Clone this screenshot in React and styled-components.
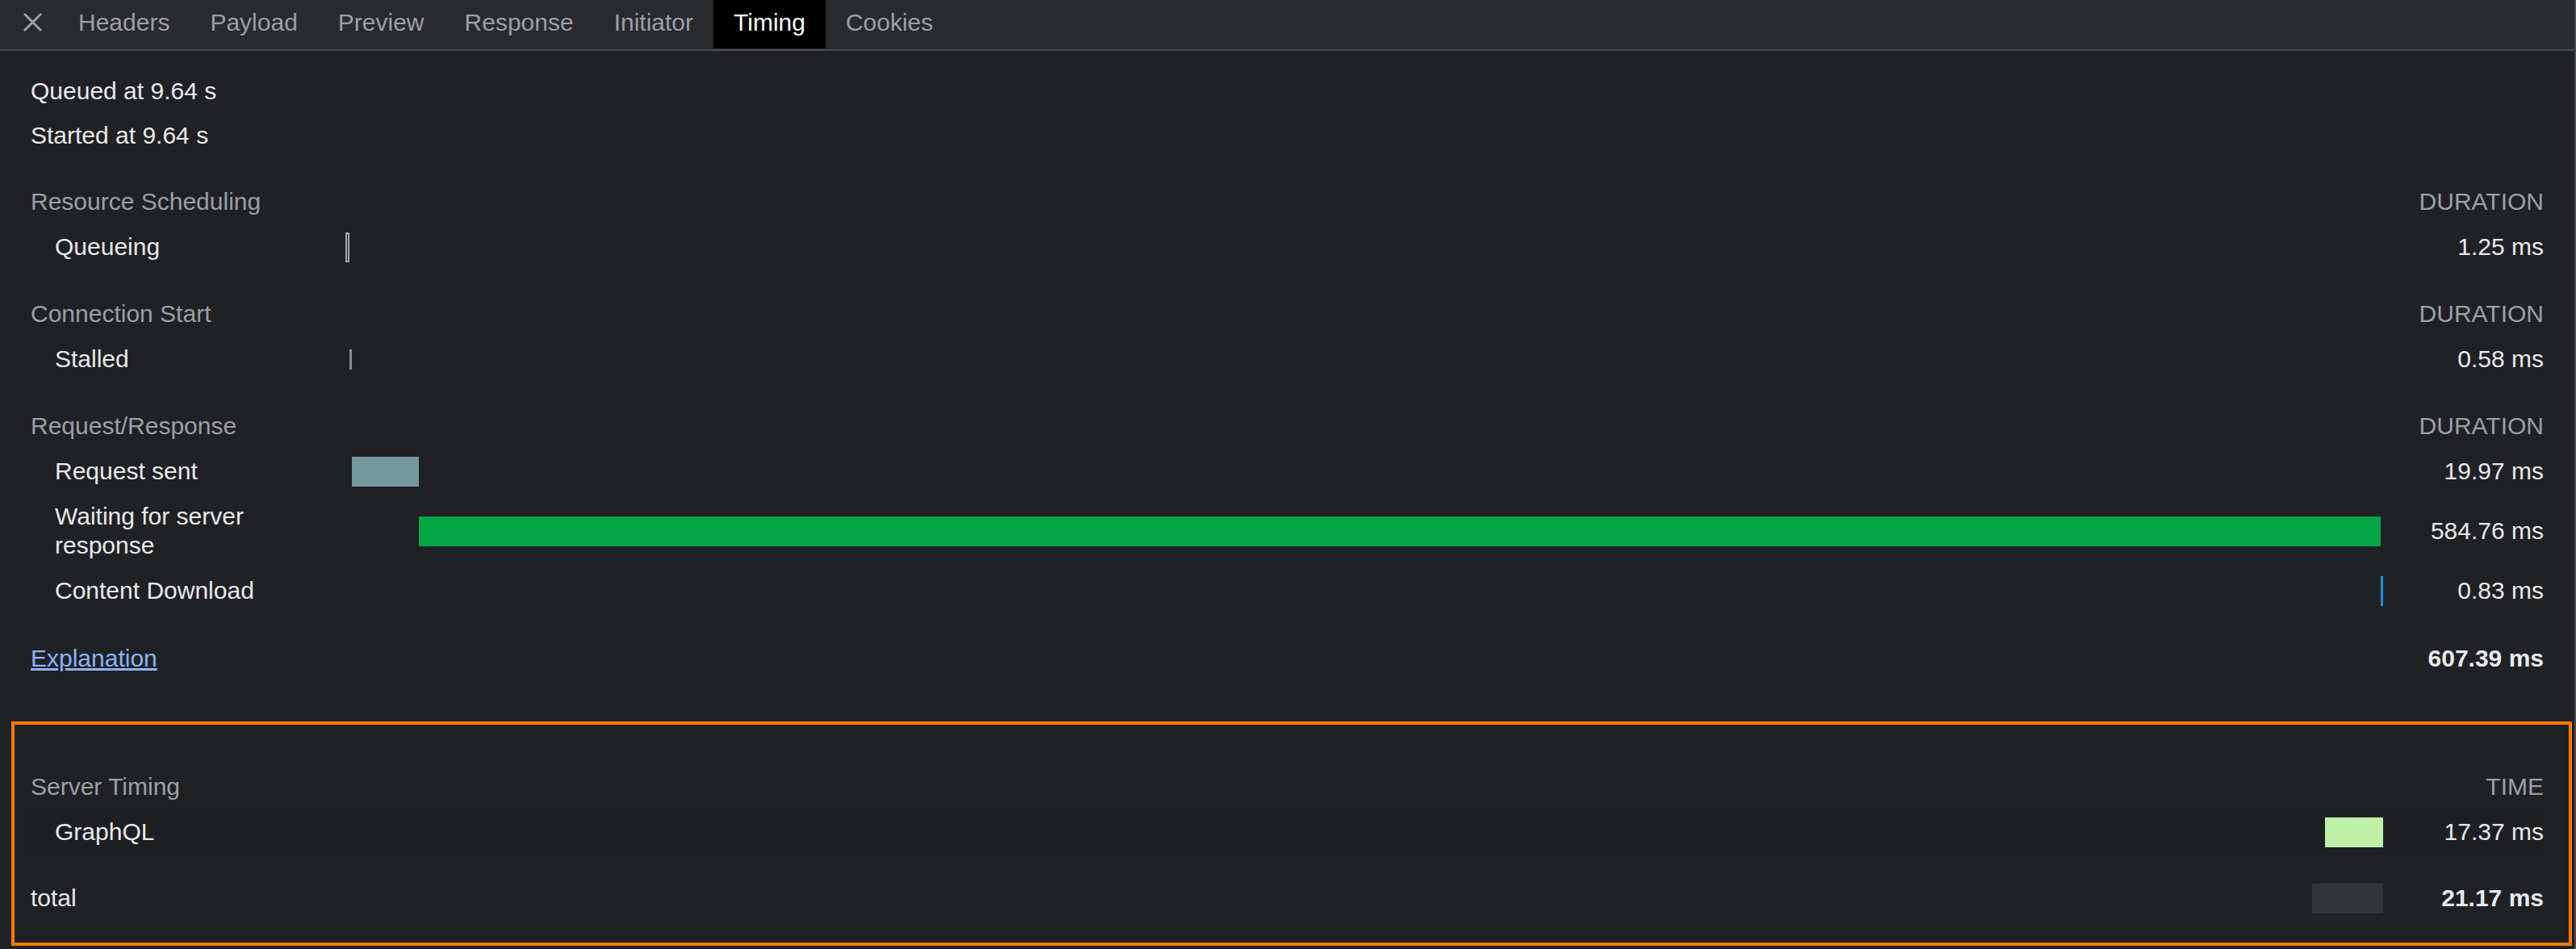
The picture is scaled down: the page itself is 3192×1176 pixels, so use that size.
import React from 'react'
import styled, {createGlobalStyle} from 'styled-components'

const GlobalStyle = createGlobalStyle`
  html, body {
    margin: 0;
    padding: 0;
    background: #202124;
    overflow: hidden;
  }
  * {
    box-sizing: border-box;
  }
`

const TOTAL_MS = 607.39
const TIMELINE_PX = 2525
const pxPerMs = TIMELINE_PX / TOTAL_MS

const tabs = ['Headers', 'Payload', 'Preview', 'Response', 'Initiator', 'Timing', 'Cookies']

const sections = [
	{
		title: 'Resource Scheduling',
		rows: [{label: 'Queueing', start: 0, ms: 1.25, value: '1.25 ms', kind: 'queue'}]
	},
	{
		title: 'Connection Start',
		rows: [{label: 'Stalled', start: 1.25, ms: 0.58, value: '0.58 ms', kind: 'stalled'}]
	},
	{
		title: 'Request/Response',
		rows: [
			{label: 'Request sent', start: 1.83, ms: 19.97, value: '19.97 ms', kind: 'sent'},
			{label: 'Waiting for server response', start: 21.8, ms: 584.76, value: '584.76 ms', kind: 'waiting'},
			{label: 'Content Download', start: 606.56, ms: 0.83, value: '0.83 ms', kind: 'download'}
		]
	}
]

const serverTimings = [
	{label: 'GraphQL', ms: 17.37, value: '17.37 ms'}
]

const CloseIcon = () => (
	<svg width="25" height="25" viewBox="0 0 25 25">
		<path d="M2 2 L23 23 M23 2 L2 23" stroke="#9aa0a6" strokeWidth="3" fill="none"/>
	</svg>
)

const App = () => {
	return (
		<Page>
			<GlobalStyle/>
			<TabBar>
				<CloseButton type="button"><CloseIcon/></CloseButton>
				{tabs.map((tab) => (
					<Tab key={tab} $active={tab === 'Timing'}>{tab}</Tab>
				))}
			</TabBar>

			<Content>
				<InfoLine>Queued at 9.64 s</InfoLine>
				<InfoLine>Started at 9.64 s</InfoLine>

				{sections.map((section) => (
					<Section key={section.title}>
						<Row>
							<HeaderLabel>{section.title}</HeaderLabel>
							<span/>
							<HeaderValue>DURATION</HeaderValue>
						</Row>
						{section.rows.map((row) => (
							<Row key={row.label}>
								<Label $indent>{row.label}</Label>
								<Timeline>
									<Bar
										$kind={row.kind}
										style={{
											marginLeft: row.start * pxPerMs,
											width: Math.max(row.ms * pxPerMs, 3)
										}}
									/>
								</Timeline>
								<Value>{row.value}</Value>
							</Row>
						))}
					</Section>
				))}

				<ExplanationRow>
					<Label><Link href="#">Explanation</Link></Label>
					<span/>
					<Value $bold>607.39 ms</Value>
				</ExplanationRow>

				<Highlight>
					<Row>
						<HeaderLabel>Server Timing</HeaderLabel>
						<span/>
						<HeaderValue>TIME</HeaderValue>
					</Row>
					{serverTimings.map((item) => (
						<Row key={item.label} $shaded>
							<Label $indent>{item.label}</Label>
							<Timeline>
								<Bar
									$kind="server"
									style={{
										marginLeft: (TOTAL_MS - item.ms) * pxPerMs,
										width: item.ms * pxPerMs
									}}
								/>
							</Timeline>
							<Value>{item.value}</Value>
						</Row>
					))}
					<TotalRow>
						<Label>total</Label>
						<Timeline>
							<Bar
								$kind="total"
								style={{
									marginLeft: (TOTAL_MS - 21.17) * pxPerMs,
									width: 21.17 * pxPerMs
								}}
							/>
						</Timeline>
						<Value $bold>21.17 ms</Value>
					</TotalRow>
				</Highlight>
			</Content>
		</Page>
	)
}

export default App

const barColors = {
	sent: '#74999a',
	waiting: '#04a647',
	download: '#1a8fd8',
	stalled: '#8a8c8f',
	server: '#bff0a8',
	total: '#333438'
}

const Page = styled.div`
  width: 100%;
  min-height: 100vh;
  background: #202124;
  border-right: 2px solid #4a4c50;
  font-family: "Liberation Sans", Arial, Helvetica, sans-serif;
  font-size: 30px;
  color: #e8eaed;
`

const TabBar = styled.div`
  display: flex;
  align-items: stretch;
  height: 63px;
  padding-left: 28px;
  background: #292a2d;
  border-bottom: 2px solid #4a4c50;
`

const CloseButton = styled.button`
  display: flex;
  align-items: flex-start;
  padding: 15px 0 0;
  margin-right: 19px;
  background: transparent;
  border: none;
  cursor: pointer;
`

const Tab = styled.div`
  padding: 0 25px;
  height: 60px;
  line-height: 56px;
  color: ${({$active}) => $active ? '#ffffff' : '#9aa0a6'};
  background: ${({$active}) => $active ? '#000000' : 'transparent'};
  white-space: nowrap;
`

const Content = styled.div`
  display: flex;
  flex-direction: column;
  padding: 22px 38px 0;
`

const InfoLine = styled.div`
  height: 55px;
  line-height: 55px;
  color: #e8eaed;
`

const Section = styled.div`
  display: flex;
  flex-direction: column;
  margin-top: 27px;
`

const Row = styled.div`
  display: grid;
  grid-template-columns: 390px 1fr 199px;
  align-items: center;
  min-height: 56px;
  padding: 10px 0;
  line-height: 36px;
  background: ${({$shaded}) => $shaded ? '#1e1f22' : 'transparent'};
`

const ExplanationRow = styled(Row)`
  margin-top: 28px;
`

const TotalRow = styled(Row)`
  margin-top: 26px;
`

const HeaderLabel = styled.div`
  color: #9aa0a6;
  white-space: nowrap;
`

const HeaderValue = styled.div`
  color: #9aa0a6;
  text-align: right;
  text-transform: uppercase;
`

const Label = styled.div`
  padding-left: ${({$indent}) => $indent ? '30px' : '0'};
  padding-right: 24px;
  color: #e8eaed;
`

const Timeline = styled.div`
  display: flex;
  align-items: center;
  height: 36px;
`

const Bar = styled.div`
  flex: none;
  height: ${({$kind}) => $kind === 'stalled' ? '25px' : '37px'};
  background: ${({$kind}) => barColors[$kind] || 'transparent'};
  border: ${({$kind}) => $kind === 'queue' ? '2px solid #a4a7ab' : 'none'};
`

const Value = styled.div`
  text-align: right;
  white-space: nowrap;
  font-weight: ${({$bold}) => $bold ? 700 : 400};
  color: #e8eaed;
`

const Link = styled.a`
  color: #8ab4f8;
  text-decoration: underline;
`

const Highlight = styled.div`
  display: flex;
  flex-direction: column;
  margin: 50px -35px 0 -24px;
  padding: 49px 31px 27px 20px;
  border: 4px solid #ff7a00;
`
